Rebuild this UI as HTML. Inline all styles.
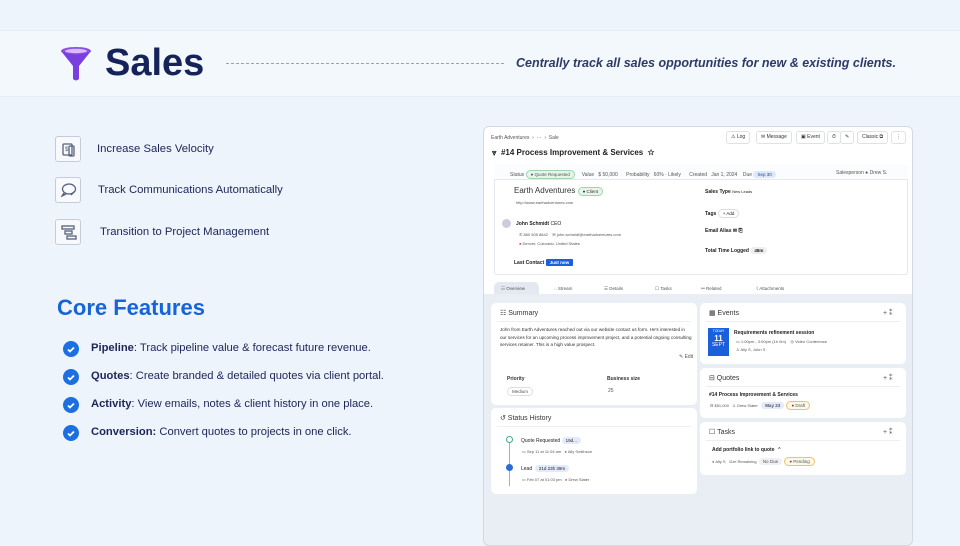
<!DOCTYPE html>
<html><head><meta charset="utf-8"><style>
*{box-sizing:border-box;margin:0;padding:0}
body{width:960px;height:540px;overflow:hidden;background:#eef4fc;font-family:"Liberation Sans",sans-serif;position:relative;color:#1c2557}
.band{position:absolute;left:0;top:30px;width:960px;height:67px;background:#f3f8fd;border-top:1px solid #e4ecf6;border-bottom:1px solid #e4ecf6}
.abs{position:absolute}
.title{left:105px;top:42px;font-size:38px;font-weight:bold;color:#15235a}
.dots{left:226px;top:63px;width:278px;border-top:1px dashed #9aa3b8}
.tag{left:516px;top:56px;font-size:12.5px;font-style:italic;color:#2d3a66;font-weight:bold}
.ib{width:26px;height:26px;border:1px solid #c5ccd9;border-radius:3px;background:#f7f9fc}
.it{font-size:11.3px;color:#1c2557}
.cf{left:57px;top:295px;font-size:22px;font-weight:bold;color:#1565d8}
.chk{width:16px;height:16px;border-radius:50%;background:#1b6fe0}
.ft{font-size:11.2px;color:#1c2557}
.panel{left:483px;top:126px;width:430px;height:420px;background:#e9edf4;border:1px solid #d3d9e4;border-radius:6px;overflow:hidden}
.top{position:absolute;left:0;top:0;width:430px;height:167px;background:#fff}
.s{font-size:5px;color:#555}
.btn{position:absolute;top:4px;height:13px;border:1px solid #dde1e8;border-radius:3px;font-size:5px;line-height:11px;padding:0 4px;color:#333;background:#fff}
.card{position:absolute;background:#fff;border-radius:5px}
.ch{font-size:7px;color:#333;position:absolute;left:9px;top:6px}
.hr{position:absolute;left:6px;right:6px;height:1px;background:#eceef2}
.pill{display:inline-block;border-radius:6px;padding:0 4px;font-size:4.5px;line-height:7px}
.tab{position:absolute;top:159px;font-size:4.5px;color:#555}
</style></head><body>
<div class="band"></div>
<svg class="abs" style="left:60px;top:46px" width="32" height="36" viewBox="0 0 32 36"><ellipse cx="16" cy="5" rx="15" ry="4" fill="#8e4de6"/><path d="M1 5 Q16 12 31 5 L19 20 L19 33 Q16 36 13 33 L13 20 Z" fill="#7b3fe0"/><ellipse cx="16" cy="5" rx="11" ry="2.2" fill="#d6bff7"/></svg>
<div class="abs title">Sales</div>
<div class="abs dots"></div>
<div class="abs tag">Centrally track all sales opportunities for new &amp; existing clients.</div>

<div class="abs ib" style="left:55px;top:136px"></div>
<div class="abs it" style="left:97px;top:143px">Increase Sales Velocity</div>
<div class="abs ib" style="left:55px;top:177px"></div>
<div class="abs it" style="left:98px;top:184px">Track Communications Automatically</div>
<div class="abs ib" style="left:55px;top:219px"></div>
<div class="abs it" style="left:100px;top:226px">Transition to Project Management</div>
<svg class="abs" style="left:61px;top:141px" width="16" height="16" viewBox="0 0 16 16" fill="none" stroke="#56617e" stroke-width="1.3"><rect x="2" y="3" width="9" height="11" rx="1"/><rect x="8" y="5" width="5" height="10" rx="1"/><text x="4" y="10" font-size="6" fill="#56617e" stroke="none">$</text></svg>
<svg class="abs" style="left:61px;top:182px" width="16" height="16" viewBox="0 0 16 16" fill="none" stroke="#56617e" stroke-width="1.3"><ellipse cx="8" cy="7" rx="6.5" ry="5"/><path d="M3 11 L1 14 L5 12"/><path d="M10 13 L14 9"/></svg>
<svg class="abs" style="left:61px;top:224px" width="16" height="16" viewBox="0 0 16 16" fill="none" stroke="#56617e" stroke-width="1.3"><rect x="1" y="2" width="12" height="3"/><rect x="4" y="7" width="7" height="3"/><rect x="6" y="12" width="9" height="3"/></svg>

<div class="abs cf">Core Features</div>
<div class="abs chk" style="left:63px;top:341px"></div>
<div class="abs chk" style="left:63px;top:369px"></div>
<div class="abs chk" style="left:63px;top:397px"></div>
<div class="abs chk" style="left:63px;top:425px"></div>
<svg class="abs" style="left:63px;top:341px" width="16" height="100"><g fill="none" stroke="#fff" stroke-width="1.8"><path d="M5 8.5l2 2 4-4"/><path d="M5 36.5l2 2 4-4"/><path d="M5 64.5l2 2 4-4"/><path d="M5 92.5l2 2 4-4"/></g></svg>
<div class="abs ft" style="left:91px;top:342px"><b>Pipeline</b>: Track pipeline value &amp; forecast future revenue.</div>
<div class="abs ft" style="left:91px;top:370px"><b>Quotes</b>: Create branded &amp; detailed quotes via client portal.</div>
<div class="abs ft" style="left:91px;top:398px"><b>Activity</b>: View emails, notes &amp; client history in one place.</div>
<div class="abs ft" style="left:91px;top:426px"><b>Conversion:</b> Convert quotes to projects in one click.</div>

<div class="abs panel">
 <div class="top">
  <div class="abs s" style="left:7px;top:8px">Earth Adventures &nbsp;›&nbsp; ··· &nbsp;›&nbsp; Sale</div>
  <div class="btn" style="left:242px">⚠ Log</div><div class="btn" style="left:272px">✉ Message</div><div class="btn" style="left:312px">▣ Event</div><div class="btn" style="left:343px">⏱</div><div class="btn" style="left:356px">✎</div><div class="btn" style="left:373px">Classic ⧉</div><div class="btn" style="left:407px">⋮</div>
  <div class="abs" style="left:8px;top:21px;font-size:8px;font-weight:bold;color:#222">⩔ &nbsp;#14 Process Improvement &amp; Services &nbsp;☆</div>
  <div class="abs" style="left:10px;top:38px;width:414px;height:110px;border:1px solid #e4e7ed;border-radius:3px"></div>
  <div class="abs" style="left:10px;top:38px;width:414px;height:15px;border-bottom:1px solid #e4e7ed;background:#fbfcfd"></div>
  <div class="abs s" style="left:26px;top:43px">Status <span class="pill" style="background:#e6f5ea;border:1px solid #9fd4ae">● Quote Requested</span> &nbsp;&nbsp;&nbsp; Value &nbsp; $ 50,000 &nbsp;&nbsp;&nbsp;&nbsp; Probability &nbsp; 60% · Likely &nbsp;&nbsp;&nbsp;&nbsp; Created &nbsp; Jan 1, 2024 &nbsp;&nbsp; Due <span class="pill" style="background:#dfe8fb;color:#2346a0">Sep 30</span></div>
  <div class="abs s" style="left:352px;top:43px">Salesperson ● Drew S.</div>
  <div class="abs" style="left:30px;top:59px;font-size:8px;color:#333">Earth Adventures <span class="pill" style="background:#e6f5ea;border:1px solid #9fd4ae;font-size:4.5px">● Client</span></div>
  <div class="abs s" style="left:32px;top:73px;font-size:4px">http://www.earthadventures.com</div>
  <div class="abs" style="left:18px;top:92px;width:9px;height:9px;border-radius:50%;background:#ccd"></div>
  <div class="abs s" style="left:32px;top:94px;font-weight:bold;color:#222">John Schmidt <span style="font-weight:normal">CEO</span></div>
  <div class="abs s" style="left:35px;top:105px;font-size:4px">✆ 860 505 8842 &nbsp;&nbsp; ✉ john.schmidt@earthadventures.com</div>
  <div class="abs s" style="left:35px;top:114px;font-size:4px"><span style="color:#c33">●</span> Denver, Colorado, United States</div>
  <div class="abs s" style="left:30px;top:132px;font-weight:bold;color:#222">Last Contact <span class="pill" style="background:#1a5fdc;color:#fff;border-radius:1px">Just now</span></div>
  <div class="abs s" style="left:221px;top:62px;font-weight:bold;color:#222">Sales Type <span style="font-weight:normal;font-size:4px">New Leads</span></div>
  <div class="abs s" style="left:221px;top:82px;font-weight:bold;color:#222">Tags <span class="pill" style="border:1px solid #ddd;font-weight:normal">+ Add</span></div>
  <div class="abs s" style="left:221px;top:101px;font-weight:bold;color:#222">Email Alias ✉ ⎘</div>
  <div class="abs s" style="left:221px;top:120px;font-weight:bold;color:#222">Total Time Logged <span class="pill" style="background:#eee">48m</span></div>
  <div class="abs" style="left:10px;top:155px;width:45px;height:12px;background:#e3e8f1;border-radius:5px 5px 0 0"></div>
  <div class="tab" style="left:17px">☷ Overview</div>
  <div class="tab" style="left:70px">◌ Stream</div>
  <div class="tab" style="left:120px">☰ Details</div>
  <div class="tab" style="left:171px">☐ Tasks</div>
  <div class="tab" style="left:217px">⚯ Related</div>
  <div class="tab" style="left:272px">⌇ Attachments</div>
 </div>
 <div class="card" style="left:7px;top:176px;width:206px;height:102px">
  <div class="ch">☷ Summary</div><div class="hr" style="top:18px"></div>
  <div class="abs s" style="left:9px;top:23px;width:192px;line-height:7.5px;font-size:4.6px;color:#333">John from Earth Adventures reached out via our website contact us form. He's interested in our services for an upcoming process improvement project, and a potential ongoing consulting services retainer. This is a high value prospect.</div>
  <div class="abs s" style="left:188px;top:51px">✎ Edit</div>
  <div class="abs s" style="left:16px;top:73px;font-weight:bold;color:#333">Priority</div><div class="abs s" style="left:116px;top:73px;font-weight:bold;color:#333">Business size</div>
  <div class="abs s" style="left:16px;top:84px"><span class="pill" style="border:1px solid #ddd">Medium</span></div><div class="abs s" style="left:117px;top:85px">25</div>
 </div>
 <div class="card" style="left:7px;top:281px;width:206px;height:86px">
  <div class="ch">↺ Status History</div><div class="hr" style="top:18px"></div>
  <div class="abs" style="left:18px;top:33px;width:1px;height:45px;background:#aab"></div>
  <div class="abs" style="left:15px;top:28px;width:7px;height:7px;border:1px solid #4a8;border-radius:50%;background:#fff"></div>
  <div class="abs" style="left:15px;top:56px;width:7px;height:7px;border-radius:50%;background:#2a6bd8"></div>
  <div class="abs s" style="left:30px;top:29px;color:#222">Quote Requested <span class="pill" style="background:#e3eafa">19d...</span></div>
  <div class="abs s" style="left:31px;top:41px;font-size:4px">▭ Sep 11 at 11:04 am &nbsp; <span style="color:#3a3">●</span> Ally Smithson</div>
  <div class="abs s" style="left:30px;top:57px;color:#222">Lead &nbsp;<span class="pill" style="background:#e3eafa">21d 23h 39m</span></div>
  <div class="abs s" style="left:31px;top:69px;font-size:4px">▭ Feb 07 at 01:03 pm &nbsp; <span style="color:#866">●</span> Drew Slater</div>
 </div>
 <div class="card" style="left:216px;top:176px;width:206px;height:61px">
  <div class="ch">▦ Events</div><div class="abs s" style="left:183px;top:6px;font-size:7px">+ ⁑</div><div class="hr" style="top:18px"></div>
  <div class="abs" style="left:8px;top:25px;width:21px;height:28px;background:#1a5fdc;color:#fff;text-align:center;font-size:3.5px;line-height:5px;padding-top:1px">TODAY<br><span style="font-size:8px;line-height:9px;font-weight:bold">11</span><br><span style="font-size:5px">SEPT</span></div>
  <div class="abs s" style="left:34px;top:27px;font-weight:bold;color:#222">Requirements refinement session</div>
  <div class="abs s" style="left:36px;top:36px;font-size:4px">▭ 1:00pm - 3:00pm (1h 0m) &nbsp;&nbsp; ◎ Video Conference</div>
  <div class="abs s" style="left:36px;top:44px;font-size:4px">♙ Ally S, John S</div>
 </div>
 <div class="card" style="left:216px;top:241px;width:206px;height:50px">
  <div class="ch">⊟ Quotes</div><div class="abs s" style="left:183px;top:6px;font-size:7px">+ ⁑</div><div class="hr" style="top:18px"></div>
  <div class="abs s" style="left:9px;top:24px;font-weight:bold;color:#222">#14 Process Improvement &amp; Services</div>
  <div class="abs s" style="left:10px;top:33px;font-size:4px">⊟ $51,000 &nbsp; ♙ Drew Slater &nbsp;&nbsp;<span class="pill" style="background:#e3eafa;font-weight:bold">May 23</span> &nbsp;<span class="pill" style="border:1px solid #f0c070;background:#fff7e8">● Draft</span></div>
 </div>
 <div class="card" style="left:216px;top:295px;width:206px;height:53px">
  <div class="ch">☐ Tasks</div><div class="abs s" style="left:183px;top:6px;font-size:7px">+ ⁑</div><div class="hr" style="top:18px"></div>
  <div class="abs s" style="left:12px;top:25px;font-weight:bold;color:#222">Add portfolio link to quote &nbsp;⌃</div>
  <div class="abs s" style="left:12px;top:35px;font-size:4px"><span style="color:#3a3">●</span> Ally S &nbsp; 11m Remaining &nbsp;<span class="pill" style="background:#eef0f4">No Due</span> &nbsp;<span class="pill" style="border:1px solid #f0c070;background:#fff7e8">● Pending</span></div>
 </div>
</div>
</body></html>
